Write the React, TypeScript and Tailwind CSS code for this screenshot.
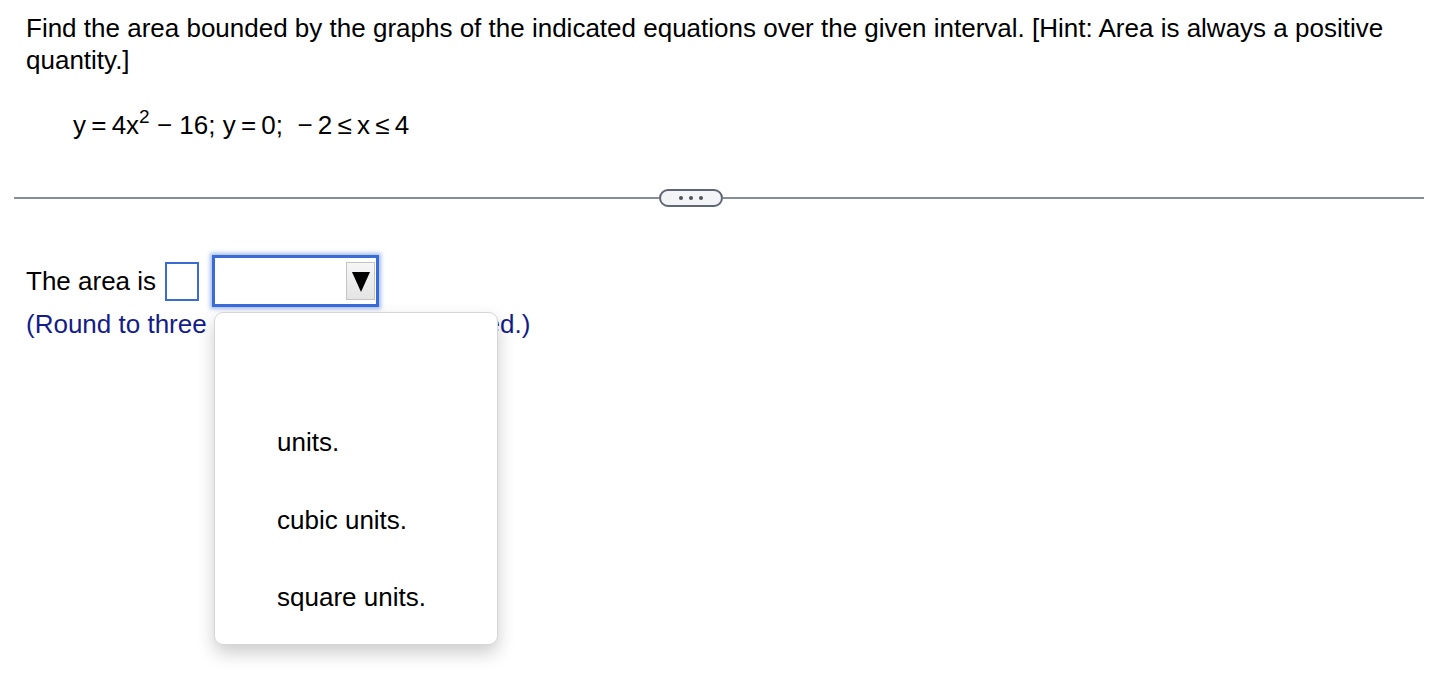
import React from "react";

const font = { fontFamily: '"Liberation Sans", Arial, sans-serif' };

export default function App() {
  return (
    <div className="relative min-h-[674px] w-[1430px] bg-white text-black" style={font}>
      <div className="pl-[14px] pr-[6px] pt-[12px]">
        <div className="px-[12px] text-[26px] leading-[32px]">
          Find the area bounded by the graphs of the indicated equations over the given interval. [Hint: Area is always a positive
          quantity.]
        </div>

        {/* equation */}
        <div className="mt-[33px] pl-[59px] text-[26px] leading-[32px]">
          y{"\u2009"}={"\u2009"}4x<sup className="relative -top-[11px] text-[19px]">2</sup> − 16; y{"\u2009"}={"\u2009"}0;&nbsp; −{"\u2009"}2{"\u2009"}≤{"\u2009"}x{"\u2009"}≤{"\u2009"}4
        </div>

        {/* divider with pill */}
        <div className="mt-[48px] flex h-[18px] items-center">
          <div className="h-[2px] w-[645px] bg-[#868c9a]" />
          <div className="flex h-[18px] w-[64px] items-center justify-center gap-[6px] rounded-full border-2 border-[#5e6675] bg-[#f3f4f6]">
            <span className="h-[4px] w-[4px] rounded-full bg-[#4b5260]" />
            <span className="h-[4px] w-[4px] rounded-full bg-[#4b5260]" />
            <span className="h-[4px] w-[4px] rounded-full bg-[#4b5260]" />
          </div>
          <div className="h-[2px] flex-1 bg-[#868c9a]" />
        </div>

        {/* answer row */}
        <div className="mt-[48px] flex items-center px-[12px] text-[26px]">
          <span>The area is</span>
          <div className="ml-[9px] h-[39px] w-[34px] border-2 border-[#3a6cd0]" />
          <div className="ml-[13px] flex h-[52px] w-[167px] items-center justify-end border-[3px] border-[#3a6cd8] pr-[1px] shadow-[0_0_4px_2px_rgba(58,108,216,0.45)]">
            <div className="flex h-[38px] w-[29px] items-center justify-center border border-[#c4c4c4] bg-gradient-to-b from-[#f6f6f6] to-[#e4e4e4]">
              <svg width="20" height="24" viewBox="0 0 20 24">
                <polygon points="1,3 19,3 10,23" fill="#000" />
              </svg>
            </div>
          </div>
        </div>
        <div className="mt-[1px] px-[12px] text-[26px] leading-[32px] text-[#121c8a]">
          (Round to three decimal places as needed.)
        </div>
      </div>

      {/* open dropdown menu */}
      <div className="absolute left-[214px] top-[312px] h-[333px] w-[284px] rounded-[9px] border border-[#d6d6d6] bg-white text-[26px] shadow-[0_8px_18px_rgba(0,0,0,0.2)]">
        <div className="absolute left-[62px] top-[113px] leading-[32px]">units.</div>
        <div className="absolute left-[62px] top-[191px] leading-[32px]">cubic units.</div>
        <div className="absolute left-[62px] top-[268px] leading-[32px]">square units.</div>
      </div>
    </div>
  );
}
